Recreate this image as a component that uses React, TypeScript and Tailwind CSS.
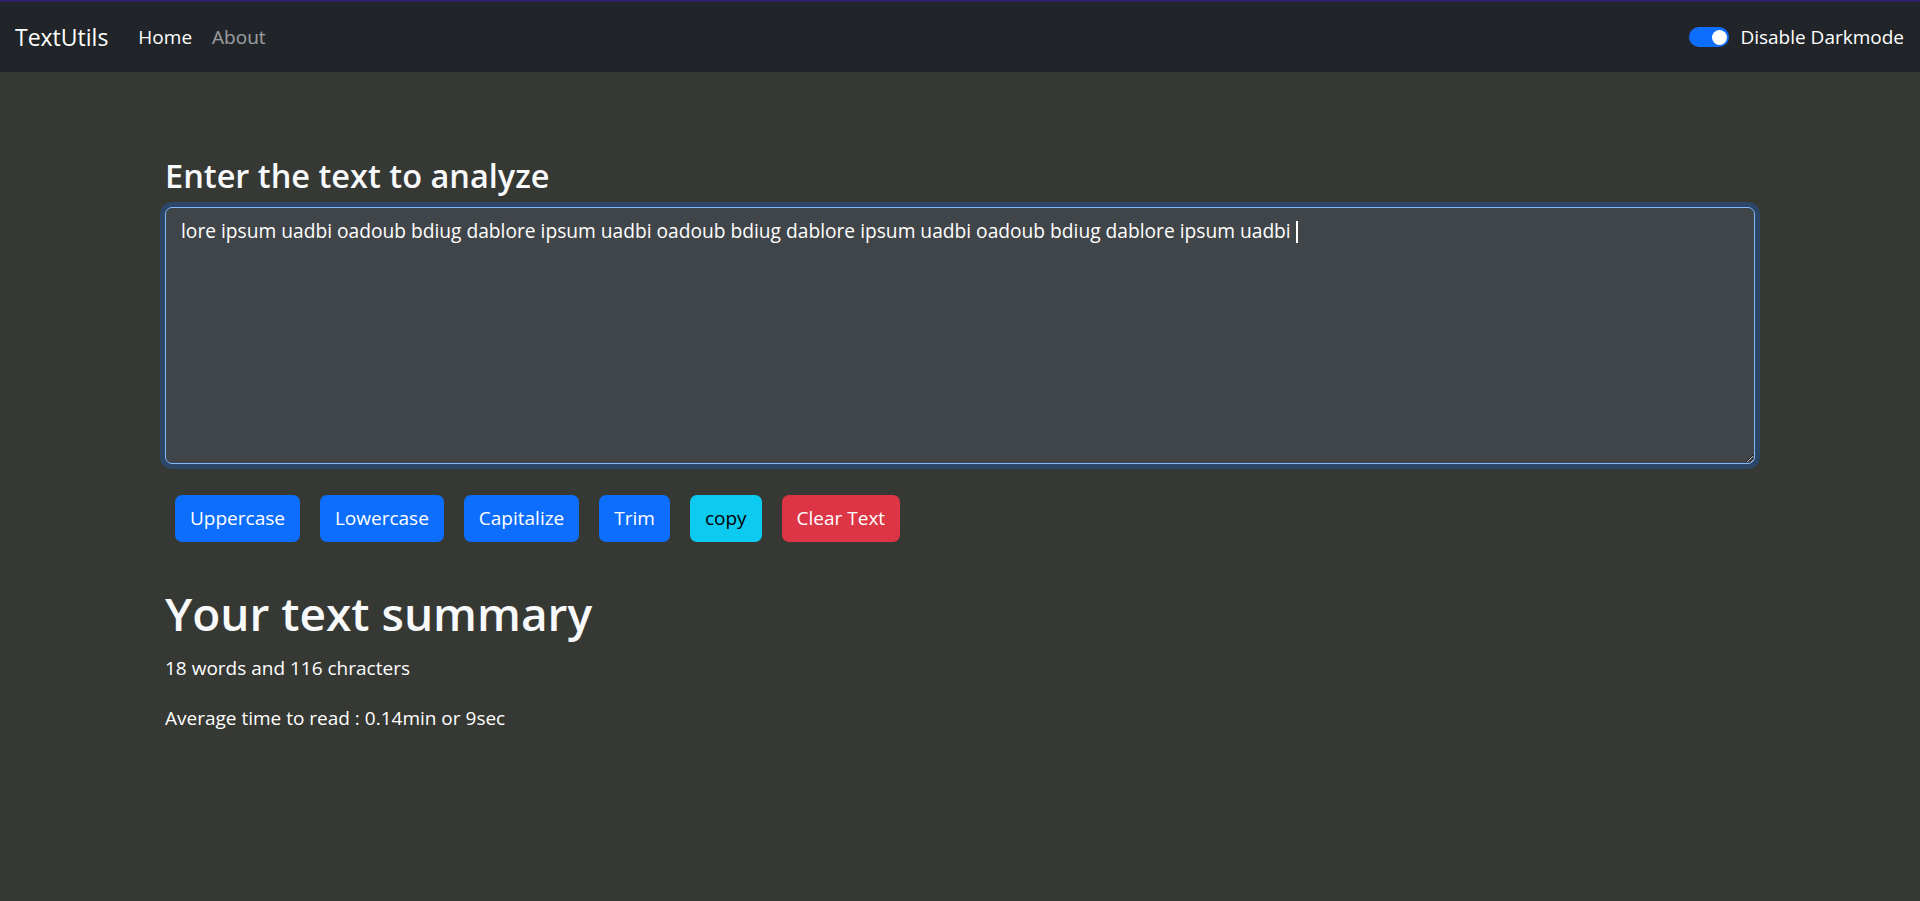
import React, { useState } from 'react';

const SAMPLE =
  'lore ipsum uadbi oadoub bdiug dablore ipsum uadbi oadoub bdiug dablore ipsum uadbi oadoub bdiug dablore ipsum uadbi ';

const Navbar: React.FC<{ dark: boolean; onToggle: () => void }> = ({ dark, onToggle }) => {
  return (
    <nav className="h-[70px] bg-[#212529] flex items-center px-[15px]">
      <a href="#" className="text-[23px] leading-[1.5] text-white mr-[20px]">TextUtils</a>
      <ul className="flex">
        <li>
          <a href="#" className="block px-[10px] text-[19px] leading-[1.5] text-white">Home</a>
        </li>
        <li>
          <a href="#" className="block px-[10px] text-[19px] leading-[1.5] text-white/55">About</a>
        </li>
      </ul>
      <div className="ml-auto flex items-center gap-[11px] pr-px">
        <button
          onClick={onToggle}
          aria-label="Toggle dark mode"
          className={`w-[40px] h-[20px] rounded-full flex items-center px-[2.5px] ${
            dark ? 'bg-[#0d6efd] justify-end' : 'bg-white border border-gray-400 justify-start'
          }`}
        >
          <span className={`w-[15px] h-[15px] rounded-full ${dark ? 'bg-white' : 'bg-gray-400'}`} />
        </button>
        <label className="text-[19px] leading-[1.5] text-white">
          {dark ? 'Disable Darkmode' : 'Enable Darkmode'}
        </label>
      </div>
    </nav>
  );
};

export default function App() {
  const [dark, setDark] = useState(true);
  const [text, setText] = useState(SAMPLE);

  const words = text.split(/\s+/).filter(w => w.length > 0).length;
  const minutes = 0.008 * words;

  return (
    <div className="min-h-screen bg-[#363834] font-['Open_Sans',sans-serif] text-white">
      <div className="h-[2px] bg-[#2e2168]" />
      <Navbar dark={dark} onToggle={() => setDark(d => !d)} />

      <div className="w-[1590px] mx-auto pt-[84px]">
        <h2 className="text-[32.5px] leading-[1.2] font-semibold text-[#f8f9fa] mb-[12px]">Enter the text to analyze</h2>
        <div className="relative">
          <textarea
            value={text}
            onChange={e => setText(e.target.value)}
            className="block w-full h-[257px] bg-[#404549] text-white border border-[#86b7fe] rounded-[7px] px-[15px] py-[7.5px] text-[19.2px] leading-[30px] shadow-[0_0_0_5px_rgba(13,110,253,0.25)] outline-none"
          />
          {/* caret overlay */}
          <div className="absolute inset-0 pointer-events-none border border-transparent px-[15px] py-[7.5px] text-[19.2px] leading-[30px] whitespace-pre-wrap text-transparent">
            {text}
            <span className="inline-block w-[2px] h-[22px] bg-white align-middle" />
          </div>
        </div>

        <div className="flex gap-[20px] px-[10px] mt-[31px]">
          <button className="h-[47px] px-[15px] text-[19px] rounded-[7px] bg-[#0d6efd] text-white">Uppercase</button>
          <button className="h-[47px] px-[15px] text-[19px] rounded-[7px] bg-[#0d6efd] text-white">Lowercase</button>
          <button className="h-[47px] px-[15px] text-[19px] rounded-[7px] bg-[#0d6efd] text-white">Capitalize</button>
          <button className="h-[47px] px-[15px] text-[19px] rounded-[7px] bg-[#0d6efd] text-white">Trim</button>
          <button className="h-[47px] px-[15px] text-[19px] rounded-[7px] bg-[#0dcaf0] text-black">copy</button>
          <button className="h-[47px] px-[15px] text-[19px] rounded-[7px] bg-[#dc3545] text-white">Clear Text</button>
        </div>

        <h1 className="text-[46px] leading-[1.2] font-semibold text-[#f8f9fa] mt-[44px] mb-[12px]">Your text summary</h1>
        <p className="text-[19px] leading-[30px] mb-[20px]">
          {words} words and {text.length} chracters
        </p>
        <p className="text-[19px] leading-[30px]">
          Average time to read : {minutes.toFixed(2)}min or {Math.round(minutes * 60)}sec
        </p>
      </div>
    </div>
  );
}
